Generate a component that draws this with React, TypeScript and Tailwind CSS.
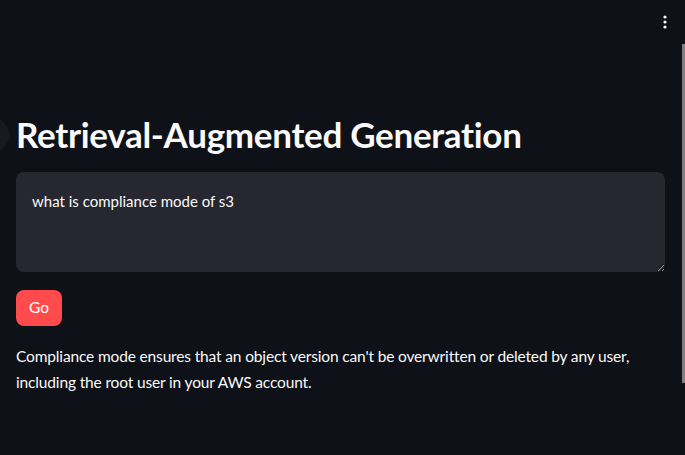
import { useState } from "react";

const font = { fontFamily: "Lato, 'Noto Sans', sans-serif" };

function Kebab() {
  return (
    <svg width="4" height="14" viewBox="0 0 4 14" fill="#fafafa">
      <circle cx="2" cy="2" r="1.6" />
      <circle cx="2" cy="7" r="1.6" />
      <circle cx="2" cy="12" r="1.6" />
    </svg>
  );
}

export default function App() {
  const [q, setQ] = useState("what is compliance mode of s3");

  return (
    <div
      className="relative h-[455px] w-[685px] overflow-hidden bg-[#0e1117] text-[#fafafa]"
      style={font}
    >
      {/* header toolbar */}
      <div className="flex h-[44px] items-center justify-end pr-[8px]">
        <button className="flex h-6 w-6 items-center justify-center">
          <Kebab />
        </button>
      </div>

      {/* scrollbar */}
      <div className="absolute right-0 top-[44px] h-[339px] w-[3px] bg-[#808080]" />

      {/* anchor circle at left */}
      <div className="absolute left-[-27px] top-[117px] h-[36px] w-[36px] rounded-full bg-[#171a21]" />

      <main className="flex flex-col px-4 pt-[68px]">
        <h1 className="text-[35px] font-bold leading-[44px] tracking-[-0.3px]">
          Retrieval-Augmented Generation
        </h1>

        <div className="mt-[16px] w-[649px]">
          <textarea
            value={q}
            onChange={(e) => setQ(e.target.value)}
            className="block h-[100px] w-full resize-y rounded-lg bg-[#262730] px-4 py-[18px] text-[15px] leading-[22px] text-[#fafafa] outline-none"
            style={font}
          />
        </div>

        <div className="mt-[18px]">
          <button className="h-[36px] rounded-lg bg-[#ff4b4b] px-[13px] text-[15.5px] text-white">
            Go
          </button>
        </div>

        <p className="mt-[17px] w-[660px] text-[15.5px] leading-[26px] tracking-[-0.15px]">
          Compliance mode ensures that an object version can't be overwritten or deleted by any user,
          including the root user in your AWS account.
        </p>
      </main>
    </div>
  );
}
